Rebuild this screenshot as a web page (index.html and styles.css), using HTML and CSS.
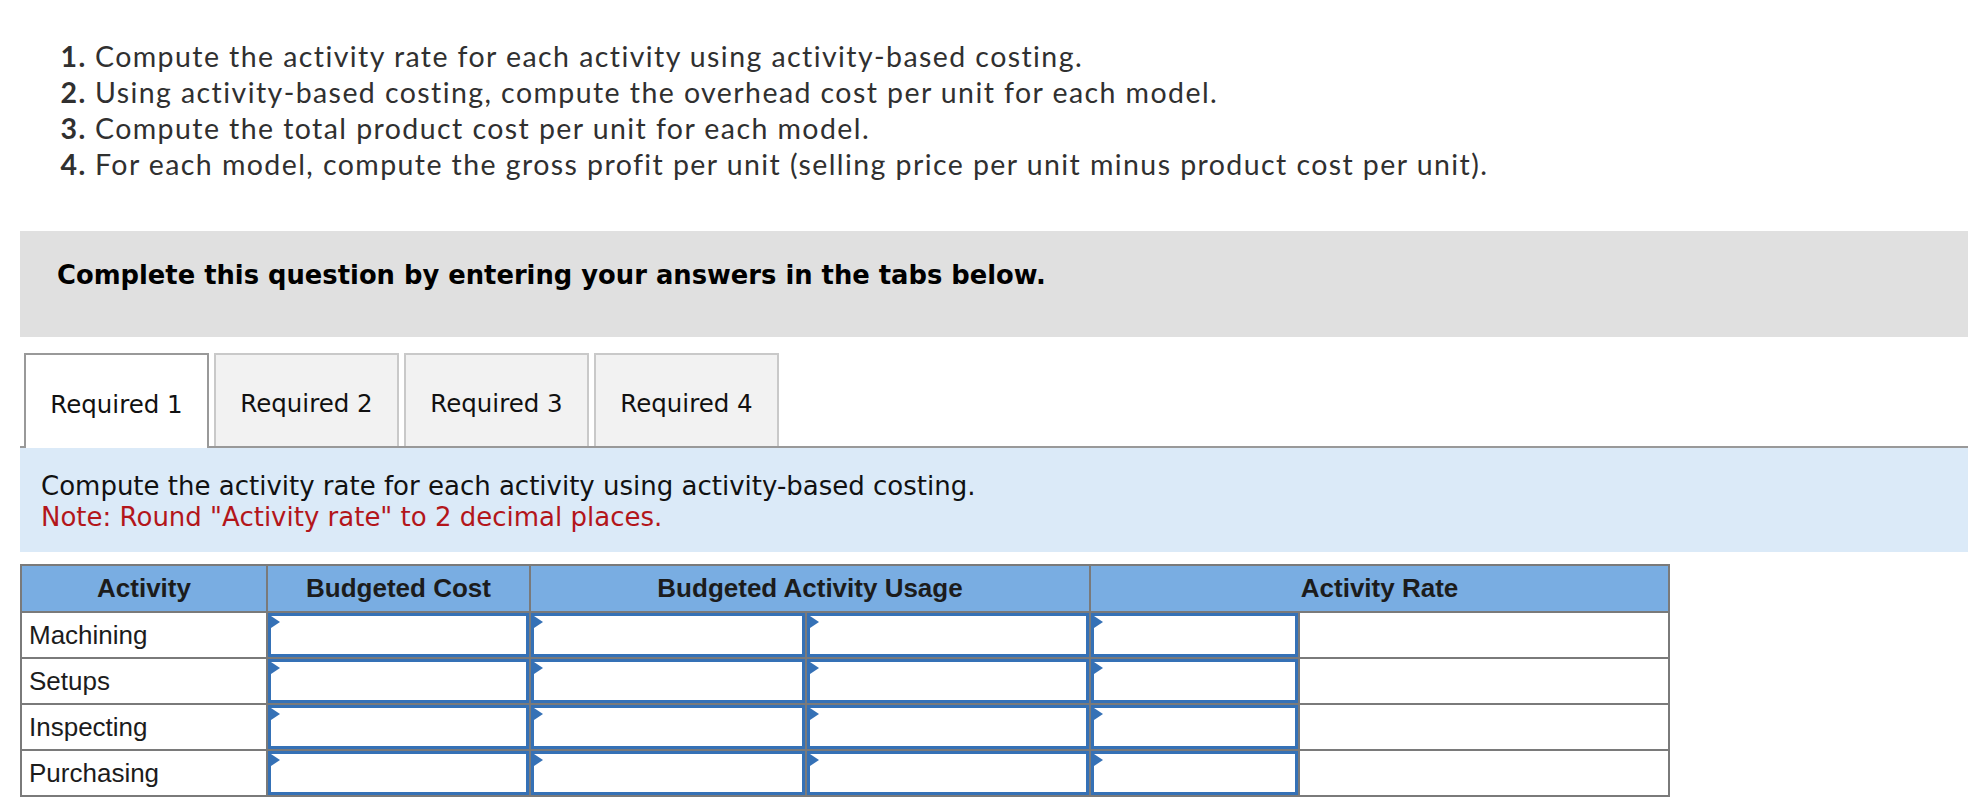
FILE: index.html
```html
<!DOCTYPE html>
<html>
<head>
<meta charset="utf-8">
<link rel="stylesheet" href="styles.css">
</head>
<body>
<div class="page">
  <ol class="steps">
    <li>Compute the activity rate for each activity using activity-based costing.</li>
    <li>Using activity-based costing, compute the overhead cost per unit for each model.</li>
    <li>Compute the total product cost per unit for each model.</li>
    <li>For each model, compute the gross profit per unit (selling price per unit minus product cost per unit).</li>
  </ol>

  <div class="banner">Complete this question by entering your answers in the tabs below.</div>

  <div class="tabs">
    <div class="tab active">Required 1</div>
    <div class="tab">Required 2</div>
    <div class="tab">Required 3</div>
    <div class="tab">Required 4</div>
  </div>

  <div class="prompt">
    <div>Compute the activity rate for each activity using activity-based costing.</div>
    <div class="note">Note: Round "Activity rate" to 2 decimal places.</div>
  </div>

  <table class="grid">
    <colgroup>
      <col class="c-act">
      <col class="c-bc">
      <col class="c-bau1">
      <col class="c-bau2">
      <col class="c-ar1">
      <col class="c-ar2">
    </colgroup>
    <thead>
      <tr>
        <th>Activity</th>
        <th>Budgeted Cost</th>
        <th colspan="2">Budgeted Activity Usage</th>
        <th colspan="2">Activity Rate</th>
      </tr>
    </thead>
    <tbody>
      <tr>
        <td class="label">Machining</td>
        <td class="in"><div class="inp"></div></td>
        <td class="in"><div class="inp"></div></td>
        <td class="in"><div class="inp"></div></td>
        <td class="in"><div class="inp"></div></td>
        <td class="out"></td>
      </tr>
      <tr>
        <td class="label">Setups</td>
        <td class="in"><div class="inp"></div></td>
        <td class="in"><div class="inp"></div></td>
        <td class="in"><div class="inp"></div></td>
        <td class="in"><div class="inp"></div></td>
        <td class="out"></td>
      </tr>
      <tr>
        <td class="label">Inspecting</td>
        <td class="in"><div class="inp"></div></td>
        <td class="in"><div class="inp"></div></td>
        <td class="in"><div class="inp"></div></td>
        <td class="in"><div class="inp"></div></td>
        <td class="out"></td>
      </tr>
      <tr>
        <td class="label">Purchasing</td>
        <td class="in"><div class="inp"></div></td>
        <td class="in"><div class="inp"></div></td>
        <td class="in"><div class="inp"></div></td>
        <td class="in"><div class="inp"></div></td>
        <td class="out"></td>
      </tr>
    </tbody>
  </table>
</div>
</body>
</html>
```
FILE: styles.css
```css
html, body {
  margin: 0;
  padding: 0;
  background: #ffffff;
}

.page {
  padding: 0 2px 0 20px;
}

.steps {
  margin: 38px 0 0 0;
  padding-left: 75px;
  font-family: "Lato", "Liberation Sans", sans-serif;
  font-size: 28.5px;
  letter-spacing: 1.42px;
  line-height: 36px;
  color: #303030;
}

.steps li::marker {
  font-weight: 700;
}

.banner {
  margin-top: 49px;
  height: 106px;
  box-sizing: border-box;
  padding: 29px 0 0 37px;
  background: #e0e0e0;
  font-family: "DejaVu Sans", Verdana, sans-serif;
  font-weight: 700;
  font-size: 25.8px;
  line-height: 30px;
  color: #000000;
}

.tabs {
  margin-top: 16px;
  display: flex;
  gap: 5px;
  padding-left: 4px;
  border-bottom: 2px solid #999999;
  height: 93px;
}

.tab {
  width: 185px;
  box-sizing: border-box;
  border: 2px solid #c9c9c9;
  border-bottom: none;
  background: #f2f2f2;
  display: flex;
  align-items: center;
  justify-content: center;
  padding-top: 5px;
  font-family: "DejaVu Sans", Verdana, sans-serif;
  font-size: 24.5px;
  color: #111111;
}

.tab.active {
  background: #ffffff;
  border-color: #999999;
  height: 95px;
  margin-bottom: -2px;
}

.prompt {
  background: #dbeaf8;
  padding: 23px 0 19px 21px;
  font-family: "DejaVu Sans", Verdana, sans-serif;
  font-size: 26px;
  line-height: 31px;
  color: #111111;
}

.note {
  color: #b3161b;
}

.grid {
  margin-top: 12px;
  border-collapse: collapse;
  table-layout: fixed;
  width: 1648px;
  font-family: "Liberation Sans", Arial, sans-serif;
  font-size: 26px;
}

.c-act { width: 246px; }
.c-bc { width: 263px; }
.c-bau1 { width: 276px; }
.c-bau2 { width: 284px; }
.c-ar1 { width: 209px; }
.c-ar2 { width: 370px; }

.grid th,
.grid td {
  border: 2px solid #7a7a7a;
  padding: 0;
}

.grid th {
  background: #79ade2;
  height: 45px;
  font-weight: 700;
  color: #1c1c1c;
  text-align: center;
  vertical-align: middle;
}

.grid td {
  height: 44px;
  vertical-align: middle;
}

.grid td.label {
  padding-left: 7px;
  color: #1c1c1c;
}

.inp {
  position: relative;
  height: 44px;
  box-sizing: border-box;
  border: 3px solid #3571b6;
  background: #ffffff;
}

.inp::before {
  content: "";
  position: absolute;
  left: 0;
  top: 0;
  width: 0;
  height: 0;
  border-top: 6px solid transparent;
  border-bottom: 6px solid transparent;
  border-left: 9px solid #3571b6;
}
```
